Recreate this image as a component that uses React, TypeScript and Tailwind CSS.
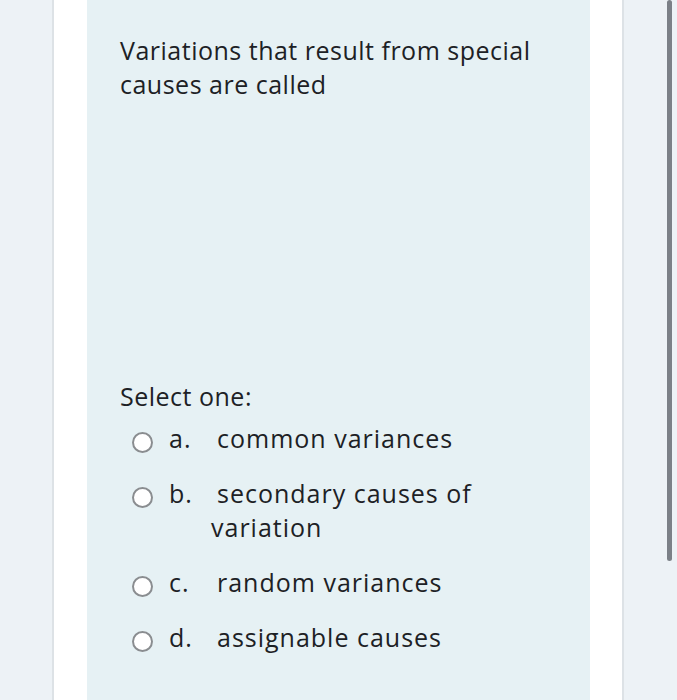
const options = [
  { key: 'a.', text: 'common variances' },
  { key: 'b.', text: 'secondary causes of variation' },
  { key: 'c.', text: 'random variances' },
  { key: 'd.', text: 'assignable causes' },
];

function Option({ k, text }: { k: string; text: string }) {
  return (
    <div className="flex items-start">
      <span className="mt-[11px] ml-[12px] h-[21px] w-[21px] shrink-0 rounded-full border-2 border-[#8a8d90] bg-white" />
      <div className="ml-[16px] w-[310px] pl-[42px] indent-[-42px] tracking-[1px]">
        <span className="inline-block w-[48px] indent-0">{k}</span>
        {text}
      </div>
    </div>
  );
}

export default function App() {
  return (
    <div
      className="relative min-h-[700px] overflow-hidden bg-[#edf2f6] text-[25px] leading-[34px] text-[#1d2125]"
      style={{ fontFamily: '"Open Sans", "Liberation Sans", sans-serif' }}
    >
      <div className="ml-[52px] min-h-[700px] w-[572px] border-x-2 border-[#dde2e6] bg-white pl-[33px]">
        <div className="min-h-[700px] w-[503px] bg-[#e6f1f4] pl-[33px] pt-[33px]">
          <p className="w-[440px] tracking-[0.5px]">Variations that result from special causes are called</p>
          <p className="mt-[278px] tracking-[0.5px]">Select one:</p>
          <div className="mt-[8px] flex flex-col gap-[21px]">
            {options.map((o) => (
              <Option key={o.key} k={o.key} text={o.text} />
            ))}
          </div>
        </div>
      </div>
      <div className="absolute left-[667px] top-0 h-[561px] w-[5px] rounded-full bg-[#7b8087]" />
    </div>
  );
}
